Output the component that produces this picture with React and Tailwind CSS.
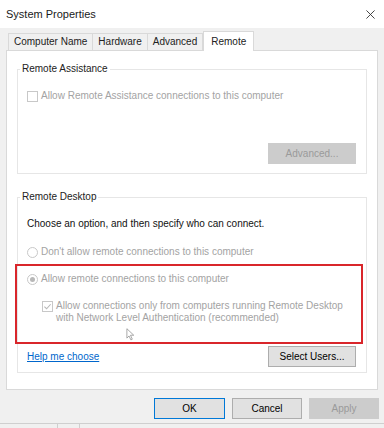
import React from 'react'

const Checkbox = ({ checked }) => (
  <span className="w-[11px] h-[11px] border border-[#c8c8c8] bg-white flex items-center justify-center shrink-0">
    {checked && (
      <svg viewBox="0 0 10 10" className="w-[9px] h-[9px]">
        <path d="M1.5 5.2 L4 7.5 L8.5 2.5" fill="none" stroke="#b8b8b8" strokeWidth="1.2" />
      </svg>
    )}
  </span>
)

const Radio = ({ checked }) => (
  <span className="w-[11px] h-[11px] rounded-full border border-[#c8c8c8] bg-white flex items-center justify-center shrink-0">
    {checked && <span className="w-[5px] h-[5px] rounded-full bg-[#b8b8b8]" />}
  </span>
)

const Tab = ({ label, active }) => (
  <div
    className={
      active
        ? 'h-[20px] px-[7px] bg-white border border-b-0 border-[#d9d9d9] flex items-center -mb-px relative z-10'
        : 'h-[17px] px-[5px] bg-[#f0f0f0] border border-b-0 border-[#d9d9d9] -ml-px first:ml-0 flex items-center'
    }
  >
    {label}
  </div>
)

const Button = ({ children, disabled, primary, className = '' }) => (
  <button
    className={`h-[21px] text-[10px] ${
      disabled ? 'bg-[#cccccc] text-[#9a9a9a] border border-[#cccccc]' : primary ? 'bg-[#e1e1e1] border border-[#0078d7] text-black' : 'bg-[#e1e1e1] border border-[#adadad] text-black'
    } ${className}`}
  >
    {children}
  </button>
)

export default function App() {
  return (
    <div className="w-[384px] h-[428px] bg-[#f0f0f0] overflow-hidden relative font-['Liberation_Sans',Arial,sans-serif] text-[10px] leading-[14px] text-black">
      {/* title bar */}
      <div className="h-[28px] bg-white flex items-center justify-between pl-[6px] pr-[9px]">
        <span className="text-[11px] text-[#1a1a1a]">System Properties</span>
        <svg viewBox="0 0 10 10" className="w-[9px] h-[9px]">
          <path d="M0.5 0.5 L9.5 9.5 M9.5 0.5 L0.5 9.5" stroke="#333" strokeWidth="1" />
        </svg>
      </div>

      {/* tabs */}
      <div className="flex items-end pl-[8px] pt-[3px] text-[#222]">
        <Tab label="Computer Name" />
        <Tab label="Hardware" />
        <Tab label="Advanced" />
        <Tab label="Remote" active />
      </div>

      {/* panel */}
      <div className="mx-[6px] h-[340px] bg-white border border-[#d9d9d9] px-[10px] pt-[11px]">
        <fieldset className="border border-[#e6e6e6] h-[112px] px-[9px]">
          <legend className="text-[#222] px-[2px] -ml-[7px]">Remote Assistance</legend>
          <div className="flex items-center gap-[3px] mt-[13px] text-[#a3a3a3]">
            <Checkbox />
            <span>Allow Remote Assistance connections to this computer</span>
          </div>
          <div className="flex justify-end mt-[40px]">
            <Button disabled className="w-[88px] mr-[1px]">Advanced...</Button>
          </div>
        </fieldset>

        <fieldset className="border border-[#e6e6e6] h-[183px] mt-[16px] px-[9px]">
          <legend className="text-[#222] px-[2px] -ml-[7px]">Remote Desktop</legend>
          <div className="mt-[13px] text-[#111]">Choose an option, and then specify who can connect.</div>
          <div className="flex items-center gap-[3px] mt-[14px] text-[#a3a3a3]">
            <Radio />
            <span>Don't allow remote connections to this computer</span>
          </div>

          <div className="relative mt-[13px]">
            <div className="flex items-center gap-[3px] text-[#a3a3a3]">
              <Radio checked />
              <span>Allow remote connections to this computer</span>
            </div>
            <div className="flex items-start gap-[3px] mt-[14px] ml-[15px] text-[#a3a3a3] leading-[12px]">
              <span className="mt-[1px]"><Checkbox checked /></span>
              <span>
                Allow connections only from computers running Remote Desktop
                <br />
                with Network Level Authentication (recommended)
              </span>
            </div>
            {/* annotation box */}
            <div className="absolute left-[-12px] top-[-8px] w-[348px] h-[80px] border-2 border-[#d9262b] pointer-events-none" />
            {/* mouse cursor */}
            <svg viewBox="0 0 12 18" className="absolute left-[99px] top-[56px] w-[9px] h-[13px]">
              <path d="M1 1 L1 14 L4 11 L6.5 16.5 L8.5 15.5 L6 10 L10.5 10 Z" fill="#fff" stroke="#888" strokeWidth="1" />
            </svg>
          </div>

          <div className="flex items-center justify-between mt-[22px]">
            <span className="text-[#0066cc] underline">Help me choose</span>
            <Button className="w-[88px] mr-[1px]">Select Users...</Button>
          </div>
        </fieldset>
      </div>

      {/* bottom buttons */}
      <div className="flex justify-end gap-[7px] pr-[5px] mt-[8px]">
        <Button primary className="w-[71px]">OK</Button>
        <Button className="w-[70px]">Cancel</Button>
        <Button disabled className="w-[70px]">Apply</Button>
      </div>

      <div className="absolute left-0 right-0 bottom-0 h-[5px] border-t border-[#cfcfcf] flex">
        <div className="w-[58px] border-r border-[#cfcfcf]" />
        <div className="w-[22px] border-r border-[#cfcfcf]" />
      </div>
    </div>
  )
}
